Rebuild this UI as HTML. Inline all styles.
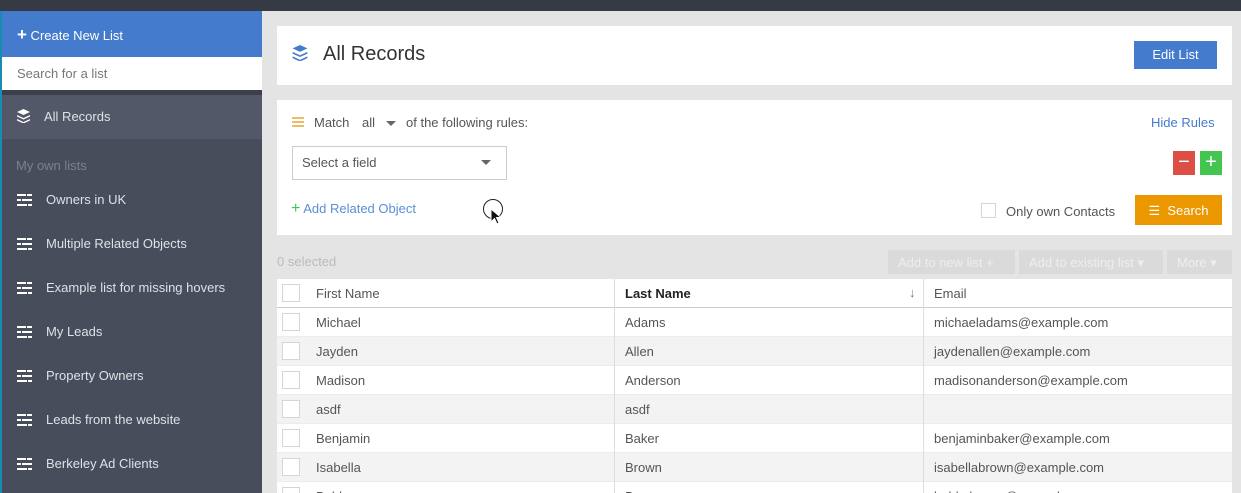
<!DOCTYPE html><html><head><style>
*{margin:0;padding:0;box-sizing:border-box}
html,body{width:1241px;height:493px;overflow:hidden}
body{background:#e4e4e4;font-family:"Liberation Sans",sans-serif;font-size:13px;color:#555;position:relative}
.a{position:absolute}
.top{left:0;top:0;width:1241px;height:11px;background:#363a45}
.strip{left:0;top:11px;width:2px;height:482px;background:#1a8bb3}
.side{left:2px;top:11px;width:260px;height:482px;background:#484d5c}
.si{left:16px;color:#dfe1e6;font-size:13px}
.panel{background:#fff}
.cb{width:18px;height:18px;border:1px solid #d5d5d5;background:#fff}
.row{left:0;width:955px;height:29px;border-bottom:1px solid #ececec}
.row span{position:absolute;top:7px}
.btn{color:#fff;text-align:center}
</style></head><body>
<div class="a top"></div>
<div class="a strip"></div>
<div class="a side"></div>
<div class="a" style="left:2px;top:11px;width:260px;height:46px;background:#447bcc;color:#fff;font-size:13px;padding:14px 0 0 15px"><span style="font-size:17px;font-weight:bold">+</span> Create New List</div>
<div class="a" style="left:2px;top:57px;width:260px;height:33px;background:#fff;color:#777;padding:9px 0 0 15px">Search for a list</div>
<div class="a" style="left:2px;top:90px;width:260px;height:5px;background:#3c404c"></div>
<div class="a" style="left:2px;top:95px;width:260px;height:44px;background:#535868"></div>
<svg class="a" style="left:17px;top:109px" width="13" height="14" viewBox="0 0 13 14"><path d="M6.5 0L13 3 6.5 6 0 3Z M0 6l6.5 3 6.5-3v1.5l-6.5 3L0 7.5Z M0 10l6.5 3 6.5-3v1.5L6.5 14.5 0 11.5Z" fill="#fff"/></svg>
<div class="a si" style="left:44px;top:109px">All Records</div>
<div class="a si" style="top:158px;color:#7c8190">My own lists</div>
<div id="lists"></div>
<script>
var n=["Owners in UK","Multiple Related Objects","Example list for missing hovers","My Leads","Property Owners","Leads from the website","Berkeley Ad Clients"];
var h="";n.forEach(function(t,i){var y=192+i*44;h+='<svg class="a" style="left:17px;top:'+(y+2)+'px" width="15" height="12"><g stroke="#fff" stroke-width="2"><line x1="0" y1="1" x2="15" y2="1"/><line x1="0" y1="6" x2="15" y2="6"/><line x1="0" y1="11" x2="15" y2="11"/></g><g fill="#484d5c"><rect x="9" y="0" width="1" height="2"/><rect x="4" y="5" width="1" height="2"/><rect x="10" y="10" width="1" height="2"/></g></svg><div class="a si" style="left:46px;top:'+y+'px">'+t+'</div>';});
document.getElementById("lists").innerHTML=h;
</script>
<div class="a panel" style="left:277px;top:26px;width:955px;height:59px"></div>
<svg class="a" style="left:291px;top:45px" width="18" height="16" viewBox="0 0 13 14"><path d="M6.5 0L13 3 6.5 6 0 3Z M0 6l6.5 3 6.5-3v1.5l-6.5 3L0 7.5Z M0 10l6.5 3 6.5-3v1.5L6.5 14.5 0 11.5Z" fill="#447bcc"/></svg>
<div class="a" style="left:323px;top:43px;font-size:20px;color:#333">All Records</div>
<div class="a btn" style="left:1134px;top:41px;width:83px;height:28px;background:#447bcc;padding-top:6px">Edit List</div>
<div class="a panel" style="left:277px;top:100px;width:955px;height:135px"></div>
<svg class="a" style="left:292px;top:117px" width="12" height="10"><g stroke="#e8a33a" stroke-width="1.5"><line x1="0" y1="1" x2="12" y2="1"/><line x1="0" y1="5" x2="12" y2="5"/><line x1="0" y1="9" x2="12" y2="9"/></g></svg>
<div class="a" style="left:314px;top:115px">Match</div>
<div class="a" style="left:362px;top:115px">all</div>
<div class="a" style="left:386px;top:121px;border:5px solid transparent;border-top-color:#666;border-bottom:0"></div>
<div class="a" style="left:406px;top:115px">of the following rules:</div>
<div class="a" style="left:1151px;top:115px;color:#447bcc">Hide Rules</div>
<div class="a" style="left:292px;top:146px;width:215px;height:34px;border:1px solid #ccc;padding:8px 0 0 9px">Select a field</div>
<div class="a" style="left:481px;top:160px;border:5px solid transparent;border-top-color:#666;border-bottom:0"></div>
<div class="a btn" style="left:1173px;top:151px;width:22px;height:24px;background:#db4f47;font-size:20px;line-height:22px">−</div>
<div class="a btn" style="left:1200px;top:151px;width:22px;height:24px;background:#43c54f;font-size:20px;line-height:22px">+</div>
<div class="a" style="left:291px;top:200px;color:#5b8fd8"><span style="color:#43c54f;font-size:16px">+</span> Add Related Object</div>
<div class="a" style="left:483px;top:199px;width:20px;height:20px;border:1.5px solid #222;border-radius:50%"></div>
<svg class="a" style="left:490px;top:208px" width="12" height="18"><path d="M1 1L1 14 4.5 10.5 7 16 9 15 6.5 9.5 11 9.5Z" fill="#111" stroke="#fff" stroke-width="1"/></svg>
<div class="a cb" style="left:981px;top:203px;width:15px;height:15px"></div>
<div class="a" style="left:1006px;top:204px">Only own Contacts</div>
<div class="a btn" style="left:1135px;top:195px;width:87px;height:30px;background:#eb9800;padding-top:8px">☰&nbsp; Search</div>
<div class="a" style="left:277px;top:254px;color:#bbb">0 selected</div>
<div class="a" style="left:888px;top:250px;width:127px;height:24px;background:#dadada;color:#eee;padding:5px 0 0 10px">Add to new list +</div>
<div class="a" style="left:1019px;top:250px;width:144px;height:24px;background:#dadada;color:#eee;padding:5px 0 0 10px">Add to existing list ▾</div>
<div class="a" style="left:1167px;top:250px;width:65px;height:24px;background:#dadada;color:#eee;padding:5px 0 0 10px">More ▾</div>
<div class="a" style="left:277px;top:279px;width:955px;height:214px;background:#fff;overflow:hidden">
<div class="a" style="left:337px;top:0;width:1px;height:214px;background:#ddd;z-index:2"></div>
<div class="a" style="left:646px;top:0;width:1px;height:214px;background:#ddd;z-index:2"></div>
<div id="rows"></div>
</div>
<script>
var r=[["First Name","<b style='color:#222'>Last Name</b>","Email"],["Michael","Adams","michaeladams@example.com"],["Jayden","Allen","jaydenallen@example.com"],["Madison","Anderson","madisonanderson@example.com"],["asdf","asdf",""],["Benjamin","Baker","benjaminbaker@example.com"],["Isabella","Brown","isabellabrown@example.com"],["Bobby","Brown","bobbybrown@example.com"]];
var s="";r.forEach(function(x,i){var y=i*29;var bg=(i%2==0&&i>0)?"#f3f3f3":"#fff";s+='<div class="a row" style="top:'+y+'px;background:'+bg+';border-bottom-color:'+(i==0?'#ccc':'#ececec')+'"><div class="a cb" style="left:5px;top:5px"></div><span style="left:39px">'+x[0]+'</span><span style="left:348px">'+x[1]+'</span><span style="left:657px">'+x[2]+'</span></div>';});
s+='<div class="a" style="left:632px;top:6px;color:#777">↓</div>';
document.getElementById("rows").innerHTML=s;
</script>
</body></html>
